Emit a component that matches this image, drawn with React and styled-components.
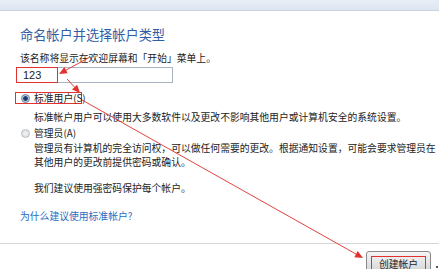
import React from 'react';
import styled, { createGlobalStyle } from 'styled-components';

const GlobalStyle = createGlobalStyle`
    body {
        margin: 0;
        background: #ffffff;
        font-family: "Noto Sans CJK SC", "Noto Sans", sans-serif;
    }
    * {
        box-sizing: border-box;
    }
`;

const Page = styled.div`
    position: relative;
    width: 439px;
    height: 269px;
    overflow: hidden;
    background: #ffffff;
    color: #222222;
`;
const TopBand = styled.div`
    height: 11px;
    background: linear-gradient(#e9eef6, #dde5f1);
    border-bottom: 1px solid #c9d3e2;
`;
const Content = styled.div`
    display: flex;
    flex-direction: column;
    padding-left: 20px;
`;
const Title = styled.div`
    margin-top: 16px;
    font-size: 13.2px;
    line-height: 16px;
    color: #2f5ea6;
`;
const Text = styled.div`
    font-size: 9.8px;
    line-height: 14px;
    margin-top: ${props => props.gap || 0}px;
    margin-left: ${props => props.indent || 0}px;
    white-space: nowrap;
`;
const InputBox = styled.div`
    display: flex;
    margin-top: 2px;
    margin-left: -4px;
    width: 157px;
    height: 16px;
    border: 1px solid #a9b4c2;
    background: #fff;
`;
const ValueMark = styled.span`
    width: 42px;
    border: 1px solid #e0332f;
    margin: -1px;
    padding-left: 6px;
    font-family: "Liberation Sans", sans-serif;
    font-size: 11px;
    line-height: 15px;
    color: #222;
`;
const RadioRow = styled.label`
    display: flex;
    align-items: center;
    gap: 4px;
    align-self: flex-start;
    white-space: nowrap;
    margin-top: ${props => props.gap}px;
    margin-left: ${props => props.framed ? -5 : -1}px;
    padding-left: ${props => props.framed ? 5 : 1}px;
    width: ${props => props.framed ? '67px' : 'auto'};
    height: 12px;
    border: 1px solid ${props => props.framed ? '#e0332f' : 'transparent'};
    font-size: 9.8px;
`;
const Radio = styled.span`
    flex: none;
    width: 9px;
    height: 9px;
    border-radius: 50%;
    border: 1px solid ${props => props.checked ? '#6c7d92' : '#b9bec5'};
    background: ${props => props.checked
        ? 'radial-gradient(circle, #1d3f6e 0 2px, #8fb1d6 2.5px, #eef2f7 4px)'
        : 'radial-gradient(circle, #f4f4f4, #d6d8db)'};
`;
const Link = styled.div`
    margin-top: 14px;
    font-size: 9.8px;
    line-height: 14px;
    color: #2a6bbf;
`;
const Footer = styled.div`
    margin-top: 20px;
    border-top: 1px solid #d6d6d6;
    display: flex;
    justify-content: flex-end;
    align-items: flex-start;
    padding: 7px 1px 0 0;
    gap: 5px;
`;
const Button = styled.button`
    width: 65px;
    height: 22px;
    padding: 4px 4px 0;
    border: 1px solid #8a8a8a;
    border-radius: 3px;
    background: linear-gradient(#f4f4f4 0%, #e6e6e6 50%, #d4d4d4 100%);
    font-family: inherit;
    cursor: pointer;
`;
const ButtonLabel = styled.span`
    display: block;
    height: 16px;
    border: 1px solid #e0332f;
    font-size: 9.8px;
    line-height: 14px;
    color: #222;
`;
const Dot = styled.span`
    margin-top: 15px;
    width: 2px;
    height: 2px;
    background: #555;
`;
const Arrows = styled.svg`
    position: absolute;
    left: 0;
    top: 0;
    pointer-events: none;
`;

const Arrow = ({ x1, y1, x2, y2 }) => {
    const a = Math.atan2(y2 - y1, x2 - x1);
    const len = 8, w = 3.5;
    const bx = x2 - len * Math.cos(a), by = y2 - len * Math.sin(a);
    const p1 = `${bx + w * Math.sin(a)},${by - w * Math.cos(a)}`;
    const p2 = `${bx - w * Math.sin(a)},${by + w * Math.cos(a)}`;
    return (
        <g>
            <line x1={x1} y1={y1} x2={bx} y2={by} stroke="#e0433f" strokeWidth="1" />
            <polygon points={`${x2},${y2} ${p1} ${p2}`} fill="#e0332f" />
        </g>
    );
};

const App = () => {
    return (
        <Page>
            <GlobalStyle />
            <TopBand />
            <Content>
                <Title>命名帐户并选择帐户类型</Title>
                <Text gap={8}>该名称将显示在欢迎屏幕和「开始」菜单上。</Text>
                <InputBox>
                    <ValueMark>123</ValueMark>
                </InputBox>
                <RadioRow gap={9} framed>
                    <Radio checked />
                    标准用户(S)
                </RadioRow>
                <Text gap={6} indent={14}>标准帐户用户可以使用大多数软件以及更改不影响其他用户或计算机安全的系统设置。</Text>
                <RadioRow gap={3}>
                    <Radio />
                    管理员(A)
                </RadioRow>
                <Text gap={2} indent={14}>管理员有计算机的完全访问权，可以做任何需要的更改。根据通知设置，可能会要求管理员在</Text>
                <Text indent={14}>其他用户的更改前提供密码或确认。</Text>
                <Text gap={12} indent={14}>我们建议使用强密码保护每个帐户。</Text>
                <Link>为什么建议使用标准帐户?</Link>
            </Content>
            <Footer>
                <Button><ButtonLabel>创建帐户</ButtonLabel></Button>
                <Dot />
            </Footer>
            <Arrows width="439" height="269">
                <Arrow x1={90} y1={57} x2={59} y2={74} />
                <Arrow x1={67} y1={79} x2={80} y2={93} />
                <Arrow x1={82} y1={100} x2={363} y2={258} />
            </Arrows>
        </Page>
    );
};

export default App;
